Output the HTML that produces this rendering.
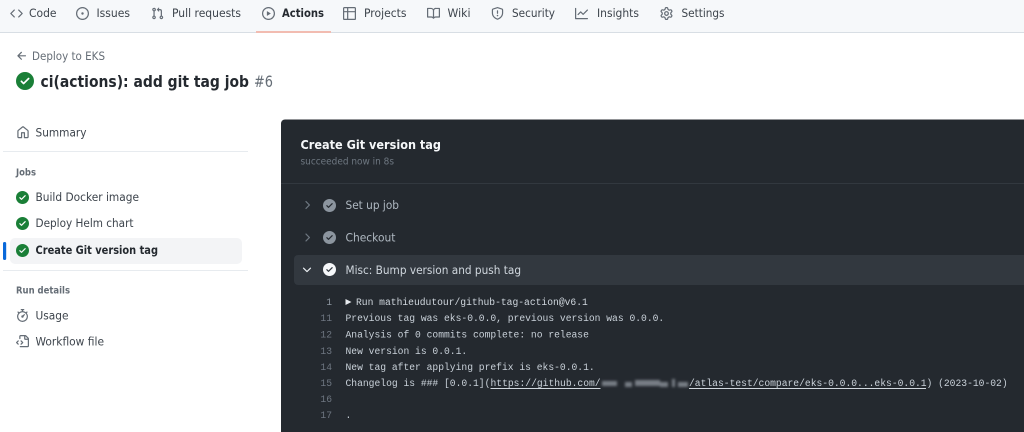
<!DOCTYPE html>
<html lang="en"><head><meta charset="utf-8"><title>ci(actions): add git tag job</title>
<style>
html,body{margin:0;padding:0;background:#fff;width:1024px;height:432px;overflow:hidden}
svg{display:block;filter:blur(.3px)}
text{font-family:"DejaVu Sans","Liberation Sans",sans-serif;font-size:11.3px;fill:#24292f}
.n{fill:#3d444c}
.s{fill:#3d444c}
.h{font-size:9.4px;font-weight:700;fill:#656d76}
.m{font-family:"Liberation Mono",monospace;font-size:9.67px;fill:#c9d1d9}
.l{font-family:"Liberation Mono",monospace;font-size:9.67px;fill:#6e7681;text-anchor:end}
.d{fill:#afb8c1}
</style></head><body>
<svg width="1024" height="432" viewBox="0 0 1024 432" xmlns="http://www.w3.org/2000/svg">
<defs>
<filter id="b" x="-20%" y="-50%" width="140%" height="200%"><feGaussianBlur stdDeviation="1.2"/></filter>
<path id="ck" d="M8 16A8 8 0 1 1 8 0a8 8 0 0 1 0 16Zm3.78-9.72a.751.751 0 0 0-.018-1.042.751.751 0 0 0-1.042-.018L6.75 9.19 5.28 7.72a.751.751 0 0 0-1.042.018.751.751 0 0 0-.018 1.042l2 2a.75.75 0 0 0 1.06 0Z"/>
<path id="cr" d="M6.22 3.22a.75.75 0 0 1 1.06 0l4.25 4.25a.75.75 0 0 1 0 1.06l-4.25 4.25a.751.751 0 0 1-1.042-.018.751.751 0 0 1-.018-1.042L9.94 8 6.22 4.28a.75.75 0 0 1 0-1.06Z"/>
</defs>
<rect width="1024" height="432" fill="#fff"/>
<rect width="1024" height="32" fill="#f6f8fa"/>
<rect y="32" width="1024" height="1" fill="#d8dee4"/>
<rect x="256" y="31" width="75" height="2" fill="#f2bcb1"/>

<g fill="#656d76">
<path transform="translate(10 7) scale(.8125)" d="m11.28 3.22 4.25 4.25a.75.75 0 0 1 0 1.06l-4.25 4.25a.749.749 0 0 1-1.275-.326.749.749 0 0 1 .215-.734L13.94 8l-3.72-3.72a.749.749 0 0 1 .326-1.275.749.749 0 0 1 .734.215Zm-6.56 0a.751.751 0 0 1 1.042.018.751.751 0 0 1 .018 1.042L2.06 8l3.72 3.72a.749.749 0 0 1-.326 1.275.749.749 0 0 1-.734-.215L.47 8.53a.75.75 0 0 1 0-1.06Z"/>
<path transform="translate(76 7) scale(.8125)" d="M8 9.5a1.5 1.5 0 1 0 0-3 1.5 1.5 0 0 0 0 3ZM8 0a8 8 0 1 1 0 16A8 8 0 0 1 8 0ZM1.5 8a6.5 6.5 0 1 0 13 0 6.5 6.5 0 0 0-13 0Z"/>
<path transform="translate(151 7) scale(.8125)" d="M1.5 3.25a2.25 2.25 0 1 1 3 2.122v5.256a2.251 2.251 0 1 1-1.5 0V5.372A2.25 2.25 0 0 1 1.5 3.25Zm5.677-.177L9.573.677A.25.25 0 0 1 10 .854V2.5h1A2.5 2.5 0 0 1 13.5 5v5.628a2.251 2.251 0 1 1-1.5 0V5a1 1 0 0 0-1-1h-1v1.646a.25.25 0 0 1-.427.177L7.177 3.427a.25.25 0 0 1 0-.354ZM3.75 2.5a.75.75 0 1 0 0 1.5.75.75 0 0 0 0-1.5Zm0 9.5a.75.75 0 1 0 0 1.5.75.75 0 0 0 0-1.5Zm8.25.75a.75.75 0 1 0 1.5 0 .75.75 0 0 0-1.5 0Z"/>
<path transform="translate(262 7) scale(.8125)" d="M8 0a8 8 0 1 1 0 16A8 8 0 0 1 8 0ZM1.5 8a6.5 6.5 0 1 0 13 0 6.5 6.5 0 0 0-13 0Zm4.879-2.773 4.264 2.559a.25.25 0 0 1 0 .428l-4.264 2.559A.25.25 0 0 1 6 10.559V5.442a.25.25 0 0 1 .379-.215Z"/>
<path transform="translate(343 7) scale(.8125)" d="M0 1.75C0 .784.784 0 1.75 0h12.5C15.216 0 16 .784 16 1.75v12.5A1.75 1.75 0 0 1 14.25 16H1.75A1.75 1.75 0 0 1 0 14.25ZM6.5 6.5v8h7.75a.25.25 0 0 0 .25-.25V6.5Zm8-1.5V1.75a.25.25 0 0 0-.25-.25H6.5V5Zm-13 1.5v7.75c0 .138.112.25.25.25H5v-8ZM5 5V1.5H1.75a.25.25 0 0 0-.25.25V5Z"/>
<path transform="translate(427 7) scale(.8125)" d="M0 1.75A.75.75 0 0 1 .75 1h4.253c1.227 0 2.317.59 3 1.501A3.743 3.743 0 0 1 11.006 1h4.245a.75.75 0 0 1 .75.75v10.5a.75.75 0 0 1-.75.75h-4.507a2.25 2.25 0 0 0-1.591.659l-.622.621a.75.75 0 0 1-1.06 0l-.622-.621A2.25 2.25 0 0 0 5.258 13H.75a.75.75 0 0 1-.75-.75Zm7.251 10.324.004-5.073-.002-2.253A2.25 2.25 0 0 0 5.003 2.5H1.5v9h3.757a3.75 3.75 0 0 1 1.994.574ZM8.755 4.75l-.004 7.322a3.752 3.752 0 0 1 1.992-.572H14.5v-9h-3.495a2.25 2.25 0 0 0-2.25 2.25Z"/>
<path transform="translate(491 7) scale(.8125)" d="M7.467.133a1.748 1.748 0 0 1 1.066 0l5.25 1.68A1.75 1.75 0 0 1 15 3.48V7c0 1.566-.32 3.182-1.303 4.682-.983 1.498-2.585 2.813-5.032 3.855a1.697 1.697 0 0 1-1.33 0c-2.447-1.042-4.049-2.357-5.032-3.855C1.32 10.182 1 8.566 1 7V3.48a1.75 1.75 0 0 1 1.217-1.667Zm.61 1.429a.25.25 0 0 0-.153 0l-5.25 1.68a.25.25 0 0 0-.174.238V7c0 1.358.275 2.666 1.057 3.86.784 1.194 2.121 2.34 4.366 3.297a.196.196 0 0 0 .154 0c2.245-.956 3.582-2.104 4.366-3.298C13.225 9.666 13.5 8.36 13.5 7V3.48a.251.251 0 0 0-.174-.237l-5.25-1.68ZM8.75 4.75v3a.75.75 0 0 1-1.5 0v-3a.75.75 0 0 1 1.5 0ZM9 10.5a1 1 0 1 1-2 0 1 1 0 0 1 2 0Z"/>
<path transform="translate(575 7) scale(.8125)" d="M1.5 1.75V13.5h13.75a.75.75 0 0 1 0 1.5H.75a.75.75 0 0 1-.75-.75V1.75a.75.75 0 0 1 1.5 0Zm14.28 2.53-5.25 5.25a.75.75 0 0 1-1.06 0L7 7.06 4.28 9.78a.751.751 0 0 1-1.042-.018.751.751 0 0 1-.018-1.042l3.25-3.25a.75.75 0 0 1 1.06 0L10 7.94l4.72-4.72a.751.751 0 0 1 1.042.018.751.751 0 0 1 .018 1.042Z"/>
<path transform="translate(660 7) scale(.8125)" d="M8 0a8.2 8.2 0 0 1 .701.031C9.444.095 9.99.645 10.16 1.29l.288 1.107c.018.066.079.158.212.224.231.114.454.243.668.386.123.082.233.09.299.071l1.103-.303c.644-.176 1.392.021 1.82.63.27.385.506.792.704 1.218.315.675.111 1.422-.364 1.891l-.814.806c-.049.048-.098.147-.088.294.016.257.016.515 0 .772-.01.147.038.246.088.294l.814.806c.475.469.679 1.216.364 1.891a7.977 7.977 0 0 1-.704 1.217c-.428.61-1.176.807-1.82.63l-1.102-.302c-.067-.019-.177-.011-.3.071a5.909 5.909 0 0 1-.668.386c-.133.066-.194.158-.211.224l-.29 1.106c-.168.646-.715 1.196-1.458 1.26a8.006 8.006 0 0 1-1.402 0c-.743-.064-1.289-.614-1.458-1.26l-.289-1.106c-.018-.066-.079-.158-.212-.224a5.738 5.738 0 0 1-.668-.386c-.123-.082-.233-.09-.299-.071l-1.103.303c-.644.176-1.392-.021-1.82-.63a8.12 8.12 0 0 1-.704-1.218c-.315-.675-.111-1.422.363-1.891l.815-.806c.05-.048.098-.147.088-.294a6.214 6.214 0 0 1 0-.772c.01-.147-.038-.246-.088-.294l-.815-.806C.635 6.045.431 5.298.746 4.623a7.92 7.92 0 0 1 .704-1.217c.428-.61 1.176-.807 1.82-.63l1.102.302c.067.019.177.011.3-.071.214-.143.437-.272.668-.386.133-.066.194-.158.211-.224l.29-1.106C6.009.645 6.556.095 7.299.03 7.53.01 7.764 0 8 0Zm-.571 1.525c-.036.003-.108.036-.137.146l-.289 1.105c-.147.561-.549.967-.998 1.189-.173.086-.34.183-.5.29-.417.278-.97.423-1.529.27l-1.103-.303c-.109-.03-.175.016-.195.045-.22.312-.412.644-.573.99-.014.031-.021.11.059.19l.815.806c.411.406.562.957.53 1.456a4.709 4.709 0 0 0 0 .582c.032.499-.119 1.05-.53 1.456l-.815.806c-.081.08-.073.159-.059.19.162.346.353.677.573.989.02.03.085.076.195.046l1.102-.303c.56-.153 1.113-.008 1.53.27.161.107.328.204.501.29.447.222.85.629.997 1.189l.289 1.105c.029.109.101.143.137.146a6.6 6.6 0 0 0 1.142 0c.036-.003.108-.036.137-.146l.289-1.105c.147-.561.549-.967.998-1.189.173-.086.34-.183.5-.29.417-.278.97-.423 1.529-.27l1.103.303c.109.029.175-.016.195-.045.22-.313.411-.644.573-.99.014-.031.021-.11-.059-.19l-.815-.806c-.411-.406-.562-.957-.53-1.456a4.709 4.709 0 0 0 0-.582c-.032-.499.119-1.05.53-1.456l.815-.806c.081-.08.073-.159.059-.19a6.464 6.464 0 0 0-.573-.989c-.02-.03-.085-.076-.195-.046l-1.102.303c-.56.153-1.113.008-1.53-.27a4.44 4.44 0 0 0-.501-.29c-.447-.222-.85-.629-.997-1.189l-.289-1.105c-.029-.11-.101-.143-.137-.146a6.6 6.6 0 0 0-1.142 0ZM11 8a3 3 0 1 1-6 0 3 3 0 0 1 6 0ZM9.5 8a1.5 1.5 0 1 0-3.001.001A1.5 1.5 0 0 0 9.5 8Z"/>
<path transform="translate(15.5 49.5) scale(.8125)" d="M7.78 12.53a.75.75 0 0 1-1.06 0L2.47 8.28a.75.75 0 0 1 0-1.06l4.25-4.25a.751.751 0 0 1 1.042.018.751.751 0 0 1 .018 1.042L4.81 7h7.44a.75.75 0 0 1 0 1.5H4.81l2.97 2.97a.75.75 0 0 1 0 1.06Z"/>
<path transform="translate(16.5 126) scale(.8125)" d="M6.906.664a1.749 1.749 0 0 1 2.187 0l5.25 4.2c.415.332.657.835.657 1.367v7.019A1.75 1.75 0 0 1 13.25 15h-3.5a.75.75 0 0 1-.75-.75V9H7v5.25a.75.75 0 0 1-.75.75h-3.5A1.75 1.75 0 0 1 1 13.25V6.23c0-.531.242-1.034.657-1.366l5.25-4.2Zm1.25 1.171a.25.25 0 0 0-.312 0l-5.25 4.2a.25.25 0 0 0-.094.196v7.019c0 .138.112.25.25.25H5.5V8.25a.75.75 0 0 1 .75-.75h3.5a.75.75 0 0 1 .75.75v5.25h2.75a.25.25 0 0 0 .25-.25V6.23a.25.25 0 0 0-.094-.195Z"/>
<path transform="translate(16 309) scale(.8125)" d="M5.75.75A.75.75 0 0 1 6.5 0h3a.75.75 0 0 1 0 1.5h-.75v1l-.001.041a6.724 6.724 0 0 1 3.464 1.435l.007-.006.75-.75a.749.749 0 0 1 1.275.326.749.749 0 0 1-.215.734l-.75.75-.006.007a6.75 6.75 0 1 1-10.548 0L2.72 5.03l-.75-.75a.751.751 0 0 1 .018-1.042.751.751 0 0 1 1.042-.018l.75.75.007.006A6.72 6.72 0 0 1 7.25 2.541V1.5H6.5a.75.75 0 0 1-.75-.75ZM8 14.5a5.25 5.25 0 1 0-.001-10.501A5.25 5.25 0 0 0 8 14.5Zm.389-6.7 1.33-1.33a.75.75 0 1 1 1.061 1.06L9.45 8.861A1.503 1.503 0 0 1 8 10.75a1.499 1.499 0 1 1 .389-2.95Z"/>
<path transform="translate(16 335) scale(.8125)" d="M4 1.75C4 .784 4.784 0 5.75 0h5.586c.464 0 .909.184 1.237.513l2.914 2.914c.329.328.513.773.513 1.237v8.586A1.75 1.75 0 0 1 14.25 15h-9a.75.75 0 0 1 0-1.5h9a.25.25 0 0 0 .25-.25V6h-2.75A1.75 1.75 0 0 1 10 4.25V1.5H5.75a.25.25 0 0 0-.25.25v2.5a.75.75 0 0 1-1.5 0Zm1.72 4.97a.75.75 0 0 1 1.06 0l2 2a.75.75 0 0 1 0 1.06l-2 2a.749.749 0 0 1-1.275-.326.749.749 0 0 1 .215-.734l1.47-1.47-1.47-1.47a.75.75 0 0 1 0-1.06ZM3.28 7.78 1.81 9.25l1.47 1.47a.751.751 0 0 1-.018 1.042.751.751 0 0 1-1.042.018l-2-2a.75.75 0 0 1 0-1.06l2-2a.751.751 0 0 1 1.042.018.751.751 0 0 1 .018 1.042Zm8.22-6.218V4.25c0 .138.112.25.25.25h2.688l-.011-.013-2.914-2.914-.013-.011Z"/>
</g>

<text class="n" x="29" y="17" textLength="27.5" lengthAdjust="spacingAndGlyphs">Code</text>
<text class="n" x="96.5" y="17" textLength="33.5" lengthAdjust="spacingAndGlyphs">Issues</text>
<text class="n" x="172" y="17" textLength="69" lengthAdjust="spacingAndGlyphs">Pull requests</text>
<text class="n" x="282" y="17" textLength="42" lengthAdjust="spacingAndGlyphs" style="font-weight:700;fill:#24292f">Actions</text>
<text class="n" x="364" y="17" textLength="42.5" lengthAdjust="spacingAndGlyphs">Projects</text>
<text class="n" x="447.5" y="17" textLength="23" lengthAdjust="spacingAndGlyphs">Wiki</text>
<text class="n" x="512" y="17" textLength="43" lengthAdjust="spacingAndGlyphs">Security</text>
<text class="n" x="597" y="17" textLength="42" lengthAdjust="spacingAndGlyphs">Insights</text>
<text class="n" x="681.5" y="17" textLength="43" lengthAdjust="spacingAndGlyphs">Settings</text>

<text x="32" y="60" textLength="73" lengthAdjust="spacingAndGlyphs" style="fill:#656d76">Deploy to EKS</text>
<use href="#ck" transform="translate(16 72) scale(1.125)" fill="#1a7f37"/>
<text x="40.5" y="87" textLength="208.5" lengthAdjust="spacingAndGlyphs" style="font-size:16px;font-weight:700;fill:#24292f">ci(actions): add git tag job</text>
<text x="254" y="87" textLength="19" lengthAdjust="spacingAndGlyphs" style="font-size:16px;fill:#656d76">#6</text>

<text class="s" x="35.5" y="136.5" textLength="51" lengthAdjust="spacingAndGlyphs">Summary</text>
<rect x="3" y="151" width="245" height="1" fill="#e7ebef"/>
<text class="h" x="16" y="175.5" textLength="20" lengthAdjust="spacingAndGlyphs">Jobs</text>
<use href="#ck" transform="translate(16 191) scale(.8125)" fill="#1a7f37"/>
<text class="s" x="35.5" y="201" textLength="103.5" lengthAdjust="spacingAndGlyphs">Build Docker image</text>
<use href="#ck" transform="translate(16 217) scale(.8125)" fill="#1a7f37"/>
<text class="s" x="35.5" y="227" textLength="98" lengthAdjust="spacingAndGlyphs">Deploy Helm chart</text>
<rect x="10" y="238" width="232" height="26" rx="5" fill="#f3f4f6"/>
<rect x="3" y="242" width="3.2" height="18" rx="1.5" fill="#0969da"/>
<use href="#ck" transform="translate(16 244) scale(.8125)" fill="#1a7f37"/>
<text class="s" x="35.5" y="254" textLength="122.5" lengthAdjust="spacingAndGlyphs" style="font-weight:700;fill:#24292f">Create Git version tag</text>
<rect x="3" y="270" width="245" height="1" fill="#e7ebef"/>
<text class="h" x="16" y="293.5" textLength="54" lengthAdjust="spacingAndGlyphs">Run details</text>
<text class="s" x="35.5" y="319.5" textLength="33" lengthAdjust="spacingAndGlyphs">Usage</text>
<text class="s" x="35.5" y="345.5" textLength="68.5" lengthAdjust="spacingAndGlyphs">Workflow file</text>

<path d="M285 119.5H1024V432H281V123.5a4 4 0 0 1 4-4Z" fill="#24292f"/>
<text x="300.5" y="149" textLength="140.5" lengthAdjust="spacingAndGlyphs" style="font-size:12.3px;font-weight:700;fill:#f6f8fa">Create Git version tag</text>
<text x="300.5" y="164.5" textLength="93.5" lengthAdjust="spacingAndGlyphs" style="font-size:9.4px;fill:#6e7781">succeeded now in 8s</text>
<rect x="281" y="183" width="743" height="1" fill="#32383f"/>

<use href="#cr" transform="translate(300.5 198.5) scale(.8125)" fill="#6e7781"/>
<use href="#ck" transform="translate(323 199) scale(.8125)" fill="#8c959f"/>
<text class="d" x="345.5" y="209" textLength="53.5" lengthAdjust="spacingAndGlyphs">Set up job</text>
<use href="#cr" transform="translate(300.5 231) scale(.8125)" fill="#6e7781"/>
<use href="#ck" transform="translate(323 231) scale(.8125)" fill="#8c959f"/>
<text class="d" x="345.5" y="241.5" textLength="50" lengthAdjust="spacingAndGlyphs">Checkout</text>
<path d="M298 255H1024V285H298a4 4 0 0 1-4-4V259a4 4 0 0 1 4-4Z" fill="#32383f"/>
<path transform="translate(300.5 263.5) scale(.8125)" fill="#eaeef2" d="M12.78 5.22a.749.749 0 0 1 0 1.06l-4.25 4.25a.749.749 0 0 1-1.06 0L3.22 6.28a.749.749 0 1 1 1.06-1.06L8 8.939l3.72-3.719a.749.749 0 0 1 1.06 0Z"/>
<use href="#ck" transform="translate(323 263) scale(.8125)" fill="#f6f8fa"/>
<text class="d" x="345.5" y="274" textLength="175.5" lengthAdjust="spacingAndGlyphs" style="fill:#d0d7de">Misc: Bump version and push tag</text>

<text class="l" x="332" y="305" style="fill:#8c959f">1</text>
<polygon points="345.5,299 351.5,302 345.5,305" fill="#e6eaee"/>
<text class="m" x="356" y="305" style="fill:#d0d7de">Run mathieudutour/github-tag-action@v6.1</text>
<text class="l" x="332" y="321">11</text><text class="m" x="345.5" y="321">Previous tag was eks-0.0.0, previous version was 0.0.0.</text>
<text class="l" x="332" y="337.5">12</text><text class="m" x="345.5" y="337.5">Analysis of 0 commits complete: no release</text>
<text class="l" x="332" y="354">13</text><text class="m" x="345.5" y="354">New version is 0.0.1.</text>
<text class="l" x="332" y="370">14</text><text class="m" x="345.5" y="370">New tag after applying prefix is eks-0.0.1.</text>
<text class="l" x="332" y="386">15</text><text class="m" x="345.5" y="386">Changelog is ### [0.0.1](</text>
<text class="m" x="490.5" y="386">https://github.com/</text>
<text class="m" x="689" y="386">/atlas-test/compare/eks-0.0.0...eks-0.0.1</text>
<text class="m" x="926.5" y="386">) (2023-10-02)</text>
<rect x="490.5" y="388" width="110" height="1" fill="#d0d7de"/>
<rect x="689" y="388" width="237" height="1" fill="#d0d7de"/>
<g fill="#777d85" filter="url(#b)">
<rect x="602" y="381" width="15" height="5"/><rect x="625" y="382" width="7" height="5"/><rect x="635" y="380" width="25" height="6"/><rect x="660" y="382" width="8" height="5"/><rect x="672" y="379" width="3" height="8"/><rect x="678" y="382" width="10" height="5"/>
</g>
<text class="l" x="332" y="402">16</text>
<text class="l" x="332" y="418">17</text><text class="m" x="345.5" y="418">.</text>
</svg>
</body></html>
